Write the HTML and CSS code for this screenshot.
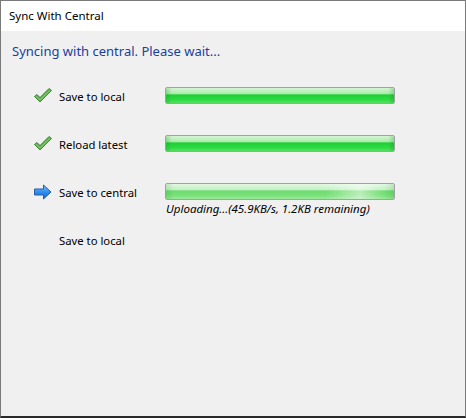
FILE: index.html
```html
<!DOCTYPE html>
<html>
<head>
<meta charset="utf-8">
<link rel="stylesheet" href="styles.css">
</head>
<body>
<div class="window">
  <div class="titlebar">Sync With Central</div>
  <div class="content">
    <div class="heading">Syncing with central. Please wait...</div>
    <div class="steps">
      <div class="step">
        <div class="icon">
          <svg width="20" height="18" viewBox="0 0 20 18"><path d="M1.5 9.5 L7 15 L18.5 3.5 L16 1.5 L7 10.5 L4 7.5 Z" fill="#5fae4f" stroke="#3d8a35" stroke-width="1" stroke-linejoin="round"/><path d="M3 9.3 L7 13.2 L17 3.4" fill="none" stroke="#8fd07a" stroke-width="1"/></svg>
        </div>
        <div class="label">Save to local</div>
        <div class="barcol"><div class="bar done"><div class="fill"></div></div></div>
      </div>
      <div class="step">
        <div class="icon">
          <svg width="20" height="18" viewBox="0 0 20 18"><path d="M1.5 9.5 L7 15 L18.5 3.5 L16 1.5 L7 10.5 L4 7.5 Z" fill="#5fae4f" stroke="#3d8a35" stroke-width="1" stroke-linejoin="round"/><path d="M3 9.3 L7 13.2 L17 3.4" fill="none" stroke="#8fd07a" stroke-width="1"/></svg>
        </div>
        <div class="label">Reload latest</div>
        <div class="barcol"><div class="bar done"><div class="fill"></div></div></div>
      </div>
      <div class="step">
        <div class="icon">
          <svg width="20" height="18" viewBox="0 0 20 18"><defs><linearGradient id="ag" x1="0" y1="0" x2="0" y2="1"><stop offset="0" stop-color="#7fc0ff"/><stop offset="0.5" stop-color="#2f8ef0"/><stop offset="1" stop-color="#1a63c8"/></linearGradient></defs><path d="M1.5 6 L10.5 6 L10.5 2 L18 9 L10.5 16 L10.5 12 L1.5 12 Z" fill="url(#ag)" stroke="#2a5fa8" stroke-width="1" stroke-linejoin="round"/></svg>
        </div>
        <div class="label">Save to central</div>
        <div class="barcol">
          <div class="bar active"><div class="fill"></div></div>
          <div class="status">Uploading...(45.9KB/s, 1.2KB remaining)</div>
        </div>
      </div>
      <div class="step">
        <div class="icon"></div>
        <div class="label">Save to local</div>
        <div class="barcol"></div>
      </div>
    </div>
  </div>
</div>
</body>
</html>
```
FILE: styles.css
```css
html, body {
  margin: 0;
  padding: 0;
  width: 466px;
  height: 418px;
  overflow: hidden;
  background: #f0f0f0;
}
.window {
  box-sizing: border-box;
  width: 466px;
  height: 418px;
  border: 1px solid #7a7a7a;
  border-bottom: 2px solid #2a2a2a;
  display: flex;
  flex-direction: column;
  font-family: "Noto Sans", "Liberation Sans", sans-serif;
  background: #f0f0f0;
}
.titlebar {
  height: 30px;
  background: #ffffff;
  color: #000;
  font-size: 11.5px;
  line-height: 30px;
  padding-left: 8px;
}
.content {
  flex: 1;
  padding: 10px 0 0 11px;
}
.heading {
  color: #1a3f9c;
  font-size: 13px;
  line-height: 20px;
}
.steps {
  margin-top: 26px;
  display: flex;
  flex-direction: column;
  gap: 31px;
}
.step {
  display: flex;
  align-items: flex-start;
  height: 17px;
}
.icon {
  width: 20px;
  height: 18px;
  margin-left: 21px;
  margin-top: 0;
}
.label {
  margin-left: 6px;
  width: 106px;
  font-size: 11.3px;
  line-height: 19px;
  color: #000;
}
.barcol {
  width: 230px;
}
.bar {
  box-sizing: border-box;
  width: 230px;
  height: 17px;
  border: 1px solid #a2a2a2;
  border-radius: 2px;
  background: #e6e6e6;
  padding: 0;
  overflow: hidden;
}
.bar .fill {
  height: 100%;
  width: 100%;
}
.bar.done .fill {
  background:
    linear-gradient(to right, rgba(0,140,20,0.25) 0, rgba(0,140,20,0) 6px, rgba(0,140,20,0) calc(100% - 6px), rgba(0,140,20,0.25) 100%),
    linear-gradient(to bottom, #d4f5d4 0, #a9eaa9 40%, #1fcf36 45%, #2ad843 75%, #55e160 100%);
}
.bar.active .fill {
  background:
    linear-gradient(to right, rgba(0,120,20,0.15) 0, rgba(0,120,20,0) 8px, rgba(255,255,255,0) 70%, rgba(255,255,255,0.5) 85%, rgba(255,255,255,0) 96%, rgba(0,120,20,0.15) 100%),
    linear-gradient(to bottom, #e2f8e2 0, #c2f0c2 40%, #6edc6e 45%, #78e078 75%, #9be89b 100%);
}
.status {
  font-style: italic;
  font-size: 11.5px;
  line-height: 17px;
  color: #000;
  margin-left: 1px;
}
```
